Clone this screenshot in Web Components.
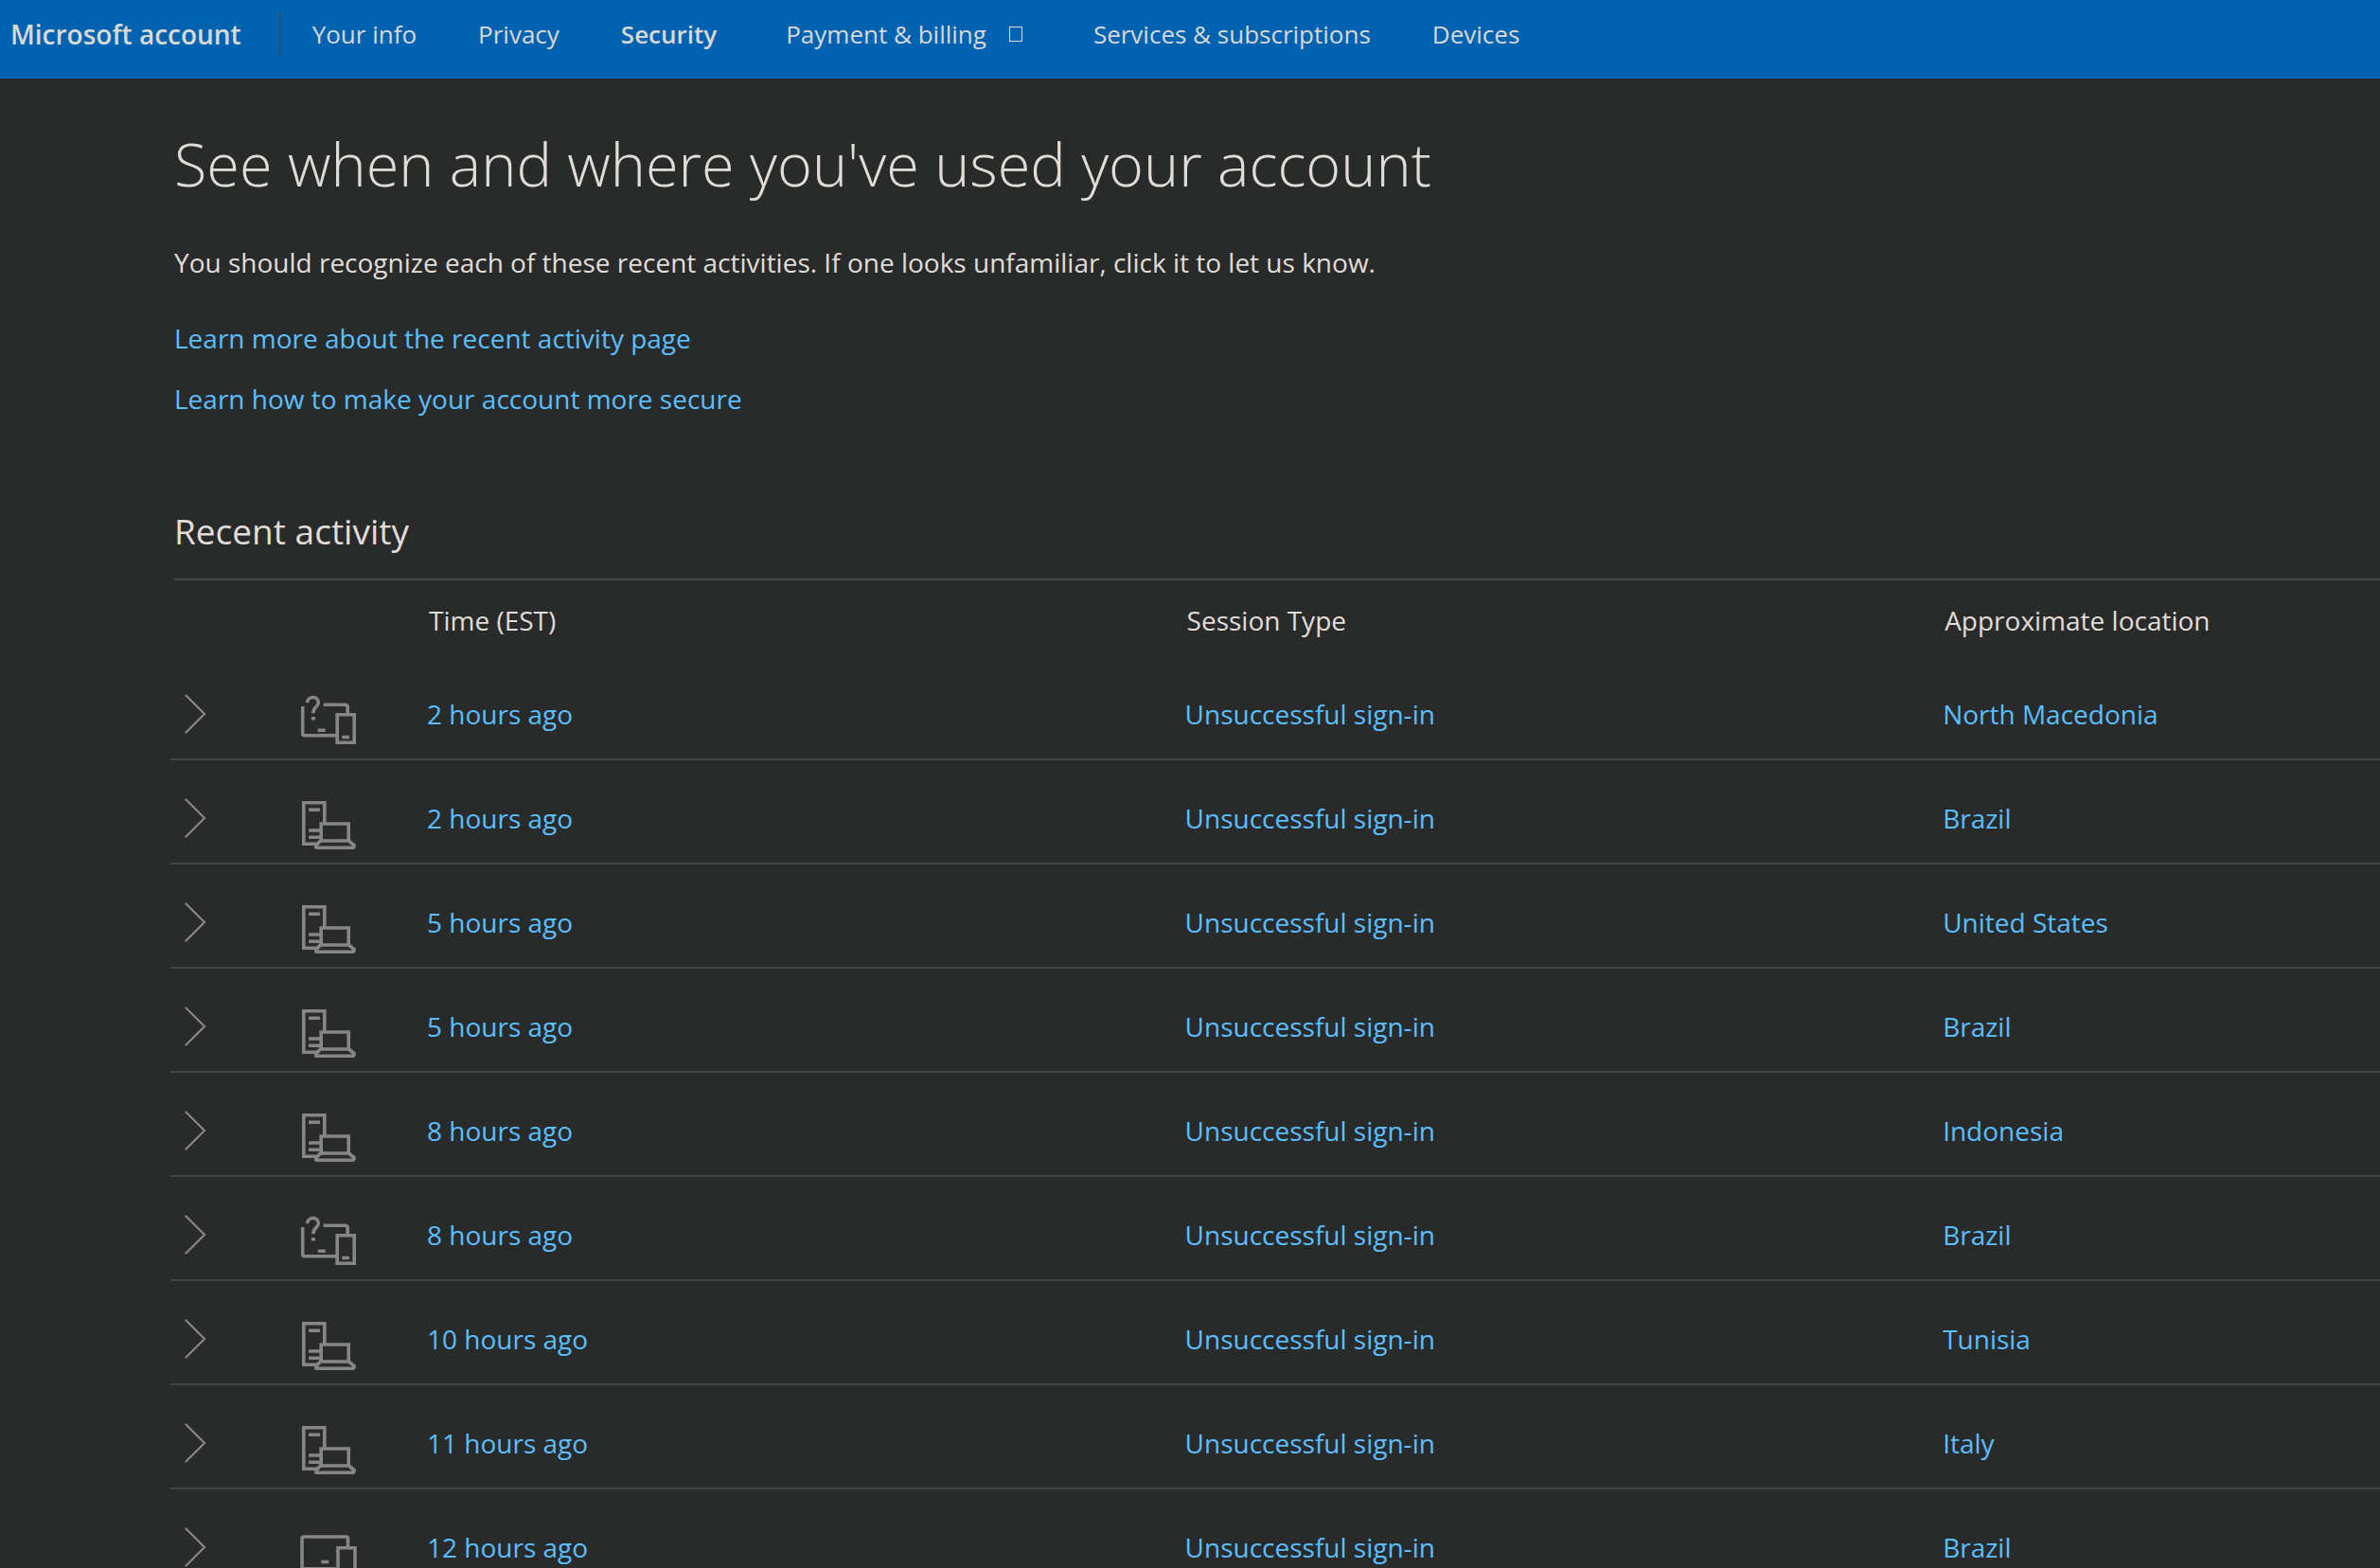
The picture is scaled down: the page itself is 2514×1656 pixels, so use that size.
<!DOCTYPE html>
<html lang="en">
<head>
<meta charset="utf-8">
<title>Recent activity</title>
<style>
  html {
    background: #292b2a;
  }
  body {
    margin: 0;
    color: #e0ddd9;
    font: 28px/40px "Open Sans", "Noto Sans", sans-serif;
  }
</style>
</head>
<body>
  <account-header brand="Microsoft account">
    <nav-item>Your info</nav-item>
    <nav-item>Privacy</nav-item>
    <nav-item current>Security</nav-item>
    <nav-item menu>Payment &amp; billing</nav-item>
    <nav-item>Services &amp; subscriptions</nav-item>
    <nav-item>Devices</nav-item>
  </account-header>

  <activity-page>
    <span slot="title">See when and where you've used your account</span>
    <span slot="intro">You should recognize each of these recent activities. If one looks unfamiliar, click it to let us know.</span>
    <text-link slot="links">Learn more about the recent activity page</text-link>
    <text-link slot="links">Learn how to make your account more secure</text-link>
    <activity-table></activity-table>
  </activity-page>

<script>
  const ACTIVITY = [
    { device: "unknown", time: "2 hours ago", location: "North Macedonia" },
    { device: "desktop", time: "2 hours ago", location: "Brazil" },
    { device: "desktop", time: "5 hours ago", location: "United States" },
    { device: "desktop", time: "5 hours ago", location: "Brazil" },
    { device: "desktop", time: "8 hours ago", location: "Indonesia" },
    { device: "unknown", time: "8 hours ago", location: "Brazil" },
    { device: "desktop", time: "10 hours ago", location: "Tunisia" },
    { device: "desktop", time: "11 hours ago", location: "Italy" },
    { device: "mobile", time: "12 hours ago", location: "Brazil" },
  ];

  const DEVICE_ICONS = {
    unknown: `
      <path d="M3.7 13V41.7Q3.7 43.7 5.7 43.7H39M25.7 11.2H48.2Q51.2 11.2 51.2 14V21"/>
      <path d="M8.5 9.2C9 1.5 20.7 1.8 20.3 9.2C20 13.8 14.8 13.5 14.8 20.3"/>
      <path d="M40.2 21.8H58.2V51.2H40.2Z"/>
      <path d="M12.8 25.7H17M19.7 38.2H27.7M45.3 45.5H53"/>`,
    desktop: `
      <path d="M19 48.2H4.8V4.8H26.8V26"/>
      <path d="M10 12.2H22M10 34H23M10 41.2H23"/>
      <path d="M23.2 45V27H52.2V45"/>
      <path d="M22.5 45H52.5L58 49.5Q58.5 52.3 56.3 52.3H18.6Q17 52.3 18.2 49.5Z"/>`,
    mobile: `
      <path d="M39 43.7H5Q3 43.7 3 41.7V12Q3 10 5 10H49.5Q51.5 10 51.5 12V21"/>
      <path d="M41 21.8H59V51.2H41Z"/>
      <path d="M23.3 36.5H31.3M46 45.5H54"/>`,
  };

  class AccountHeader extends HTMLElement {
    constructor() {
      super();
      this.attachShadow({ mode: "open" });
    }

    connectedCallback() {
      this.shadowRoot.innerHTML = `
        <style>
          :host {
            display: block;
            background: #0063b1;
            color: #dad8d5;
          }
          header {
            display: flex;
            align-items: flex-start;
            padding: 12px 11px 23px;
          }
          .brand {
            padding: 4px 40px 4px 0;
            border-right: 2px solid #2f4f6b;
            color: inherit;
            font-weight: 600;
            text-decoration: none;
            white-space: nowrap;
          }
          nav {
            display: flex;
            gap: 65px;
            padding: 4px 0 4px 33px;
          }
        </style>
        <header>
          <a class="brand" href="#">${this.getAttribute("brand")}</a>
          <nav><slot></slot></nav>
        </header>
      `;
    }
  }

  class NavItem extends HTMLElement {
    constructor() {
      super();
      this.attachShadow({ mode: "open" });
    }

    connectedCallback() {
      const isMenu = this.hasAttribute("menu");
      this.shadowRoot.innerHTML = `
        <style>
          :host {
            display: block;
            font-size: 26px;
            white-space: nowrap;
          }
          :host([current]) {
            font-weight: 600;
          }
          :host([menu]) {
            padding: 0 10px 0 8px;
          }
          a, button {
            display: flex;
            align-items: center;
            gap: 24px;
            margin: 0;
            padding: 0;
            border: 0;
            background: none;
            color: inherit;
            font: inherit;
            text-decoration: none;
          }
          .arrow {
            box-sizing: border-box;
            width: 14px;
            height: 16px;
            border: 1px solid;
          }
        </style>
        ${isMenu
          ? `<button type="button"><slot></slot><span class="arrow"></span></button>`
          : `<a href="#"><slot></slot></a>`}
      `;
    }
  }

  class TextLink extends HTMLElement {
    constructor() {
      super();
      this.attachShadow({ mode: "open" });
      this.shadowRoot.innerHTML = `
        <style>
          :host {
            display: block;
          }
          a {
            color: #5bbfff;
            text-decoration: none;
          }
        </style>
        <a href="#"><slot></slot></a>
      `;
    }
  }

  class ActivityPage extends HTMLElement {
    constructor() {
      super();
      this.attachShadow({ mode: "open" });
      this.shadowRoot.innerHTML = `
        <style>
          :host {
            display: block;
            padding: 46px 0 0 180px;
          }
          .intro {
            padding-left: 4px;
          }
          h1 {
            margin: 0;
            font-size: 63px;
            font-weight: 350;
            line-height: 88px;
          }
          p {
            margin: 40px 0;
          }
          .links {
            display: grid;
            gap: 24px;
          }
        </style>
        <main>
          <div class="intro">
            <h1><slot name="title"></slot></h1>
            <p><slot name="intro"></slot></p>
            <div class="links"><slot name="links"></slot></div>
          </div>
          <slot></slot>
        </main>
      `;
    }
  }

  class DeviceIcon extends HTMLElement {
    constructor() {
      super();
      this.attachShadow({ mode: "open" });
    }

    connectedCallback() {
      this.shadowRoot.innerHTML = `
        <style>
          :host {
            display: block;
          }
          svg {
            display: block;
            width: 62px;
            height: 54px;
            fill: none;
            stroke: #868686;
            stroke-width: 3.6;
          }
        </style>
        <svg viewBox="0 0 62 54" aria-hidden="true">${DEVICE_ICONS[this.getAttribute("type")]}</svg>
      `;
    }
  }

  class ExpandButton extends HTMLElement {
    constructor() {
      super();
      this.attachShadow({ mode: "open" });
      this.shadowRoot.innerHTML = `
        <style>
          :host {
            display: block;
          }
          button {
            display: block;
            padding: 0;
            border: 0;
            background: none;
          }
          svg {
            display: block;
            fill: none;
            stroke: #868686;
            stroke-width: 2.2;
            stroke-linecap: round;
          }
        </style>
        <button type="button" aria-label="Show details">
          <svg width="24" height="44" viewBox="0 0 24 44"><path d="M1.5 2.5L21 22L1.5 41.5"/></svg>
        </button>
      `;
    }
  }

  class ActivityTable extends HTMLElement {
    constructor() {
      super();
      this.attachShadow({ mode: "open" });
    }

    connectedCallback() {
      this.render();
    }

    render() {
      const rows = ACTIVITY.map((item) => `
        <tr>
          <td><expand-button></expand-button></td>
          <td><device-icon type="${item.device}"></device-icon></td>
          <td><text-link>${item.time}</text-link></td>
          <td><text-link>Unsuccessful sign-in</text-link></td>
          <td><text-link>${item.location}</text-link></td>
        </tr>`).join("");

      this.shadowRoot.innerHTML = `
        <style>
          :host {
            display: block;
            margin-top: 94px;
          }
          h2 {
            margin: 0 0 0 4px;
            padding-bottom: 24px;
            border-bottom: 2px solid #42474a;
            font-size: 37px;
            font-weight: 400;
            line-height: 52px;
          }
          table, thead, tbody {
            display: block;
          }
          tr {
            display: grid;
            grid-template-columns: 136px 135px 26fr 26fr 15fr;
            align-items: center;
            box-sizing: border-box;
            height: 110px;
            padding-top: 14px;
            border-bottom: 2px solid #42454a;
          }
          thead tr {
            height: 80px;
            padding-top: 4px;
            border-bottom: 0;
          }
          th, td {
            padding: 0;
            font-weight: 400;
            text-align: left;
          }
          th {
            padding-left: 2px;
          }
          expand-button {
            margin-left: 15px;
          }
          device-icon {
            padding-top: 12px;
          }
        </style>
        <h2>Recent activity</h2>
        <table>
          <thead>
            <tr>
              <th></th>
              <th></th>
              <th scope="col">Time (EST)</th>
              <th scope="col">Session Type</th>
              <th scope="col">Approximate location</th>
            </tr>
          </thead>
          <tbody>${rows}</tbody>
        </table>
      `;
    }
  }

  customElements.define("text-link", TextLink);
  customElements.define("nav-item", NavItem);
  customElements.define("account-header", AccountHeader);
  customElements.define("device-icon", DeviceIcon);
  customElements.define("expand-button", ExpandButton);
  customElements.define("activity-table", ActivityTable);
  customElements.define("activity-page", ActivityPage);
</script>
</body>
</html>
